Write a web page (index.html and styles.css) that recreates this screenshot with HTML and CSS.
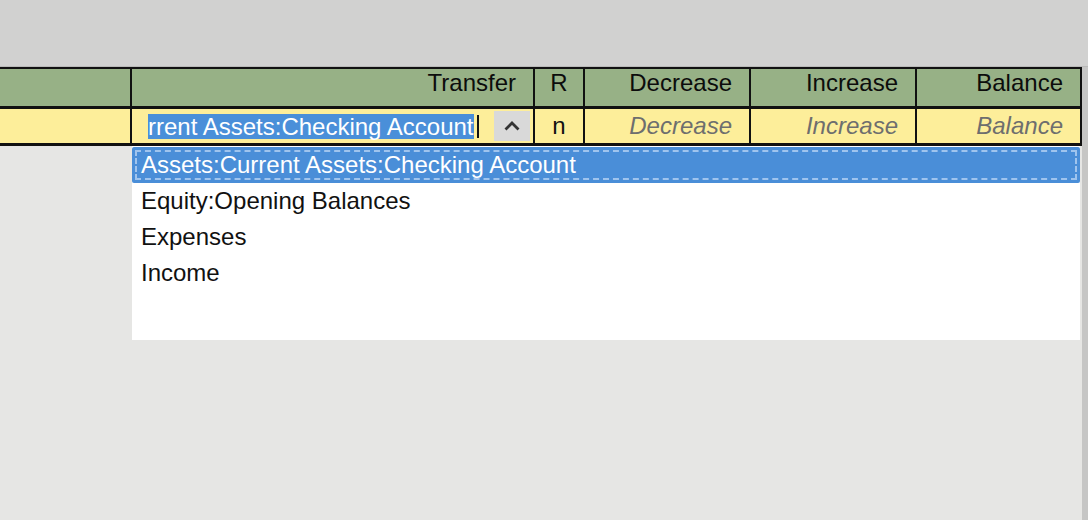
FILE: index.html
```html
<!DOCTYPE html>
<html lang="en">
<head>
  <meta charset="UTF-8">
  <link rel="stylesheet" href="styles.css">
</head>
<body>

  <div class="topbar"></div>

  <div class="workspace">
    <div class="register">
      <div class="ledger">
        <div class="cell head"></div>
        <div class="cell head">Transfer</div>
        <div class="cell head center">R</div>
        <div class="cell head">Decrease</div>
        <div class="cell head">Increase</div>
        <div class="cell head">Balance</div>

        <div class="cell entry"></div>
        <div class="cell entry transfer">
          <span class="selected-text">rrent Assets:Checking Account</span>
          <span class="caret"></span>
          <button class="popup-btn" type="button">
            <svg width="18" height="12" viewBox="0 0 18 12">
              <polyline points="2.5,9.5 9,3 15.5,9.5" fill="none" stroke="#333" stroke-width="2.8"/>
            </svg>
          </button>
        </div>
        <div class="cell entry center">n</div>
        <div class="cell entry hint">Decrease</div>
        <div class="cell entry hint">Increase</div>
        <div class="cell entry hint">Balance</div>
      </div>

      <ul class="account-list">
        <li class="active">Assets:Current Assets:Checking Account</li>
        <li>Equity:Opening Balances</li>
        <li>Expenses</li>
        <li>Income</li>
      </ul>
    </div>
    <div class="scroll-strip"></div>
  </div>

</body>
</html>
```

FILE: styles.css
```css
html, body {
  margin: 0;
  padding: 0;
  height: 520px;
  overflow: hidden;
}

body {
  font-family: "Liberation Sans", Arial, sans-serif;
  font-size: 24px;
  background: #e6e6e4;
  color: #111;
}

.topbar {
  height: 66px;
  background: #d1d1d0;
  border-bottom: 1px solid #b9b9b8;
}

.workspace {
  display: flex;
  height: 453px;
}

.register {
  width: 1082px;
}

.scroll-strip {
  flex: 1;
  background: #c6c6c5;
}

.ledger {
  display: grid;
  grid-template-columns: 130px 401px 48px 164px 164px 163px;
  grid-template-rows: 37px 34px;
  column-gap: 2px;
  row-gap: 3px;
  background: #111;
  border-top: 2px solid #111;
  border-right: 2px solid #111;
  border-bottom: 3px solid #111;
}

.cell {
  display: flex;
  align-items: center;
  justify-content: flex-end;
  padding-right: 17px;
  line-height: 1;
}

.cell.center {
  justify-content: center;
  padding-right: 0;
}

.head {
  background: #97b186;
  padding-bottom: 9px;
  color: #0c0c0c;
}

.entry {
  background: #fdee9a;
}

.hint {
  font-style: italic;
  color: #6e6e6e;
}

.transfer {
  justify-content: flex-start;
  padding: 0 3px 0 16px;
}

.selected-text {
  background: #4a8fd9;
  color: #fff;
  height: 25px;
  line-height: 26px;
  white-space: nowrap;
}

.caret {
  width: 2px;
  height: 23px;
  background: #111;
  margin-left: 3px;
}

.popup-btn {
  margin-left: auto;
  width: 36px;
  height: 30px;
  border: none;
  padding: 0;
  background: #d9d9d9;
  display: flex;
  align-items: center;
  justify-content: center;
}

.account-list {
  list-style: none;
  margin: 0 0 0 132px;
  padding: 1px 0 0;
  width: 948px;
  height: 193px;
  background: #fff;
}

.account-list li {
  height: 36px;
  line-height: 36px;
  padding-left: 9px;
  white-space: nowrap;
}

.account-list li.active {
  background: #4a8ed8;
  color: #fff;
  outline: 2px dashed #9fc4ee;
  outline-offset: -5px;
  border-radius: 2px;
}
```
